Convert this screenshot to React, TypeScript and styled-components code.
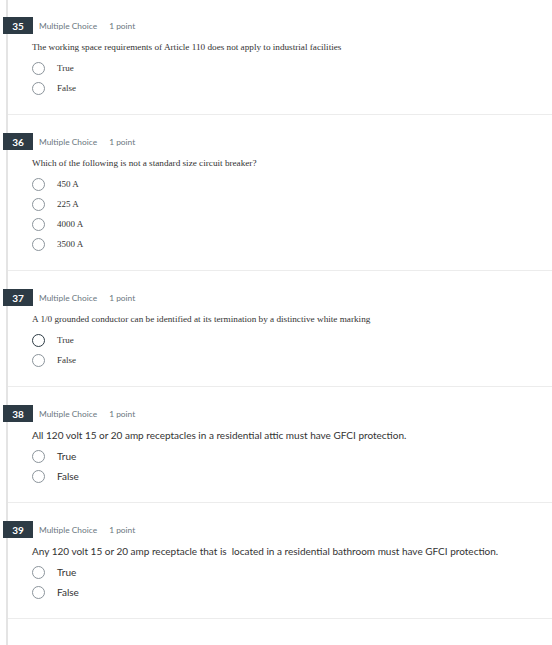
import styled, { createGlobalStyle, css } from 'styled-components';

const GlobalStyle = createGlobalStyle`
  html, body {
    margin: 0;
    padding: 0;
    background: #ffffff;
  }
  body {
    font-family: Lato, "Open Sans", sans-serif;
    color: #2d3b45;
  }
`;

type Face = 'serif' | 'sans';

interface Question {
  number: number;
  text: string;
  face: Face;
  options: string[];
  focused?: number;
}

const questions: Question[] = [
  {
    number: 35,
    text: 'The working space requirements of Article 110 does not apply to industrial facilities',
    face: 'serif',
    options: ['True', 'False'],
  },
  {
    number: 36,
    text: 'Which of the following is not a standard size circuit breaker?',
    face: 'serif',
    options: ['450 A', '225 A', '4000 A', '3500 A'],
  },
  {
    number: 37,
    text: 'A 1/0 grounded conductor can be identified at its termination by a distinctive white marking',
    face: 'serif',
    options: ['True', 'False'],
    focused: 0,
  },
  {
    number: 38,
    text: 'All 120 volt 15 or 20 amp receptacles in a residential attic must have GFCI protection.',
    face: 'sans',
    options: ['True', 'False'],
  },
  {
    number: 39,
    text: 'Any 120 volt 15 or 20 amp receptacle that is  located in a residential bathroom must have GFCI protection.',
    face: 'sans',
    options: ['True', 'False'],
  },
];

const faceStyles = {
  serif: css`
    font-family: "Liberation Serif", "Times New Roman", serif;
    font-size: 9.2px;
  `,
  sans: css`
    font-family: Lato, "Open Sans", sans-serif;
    font-size: 10px;
  `,
};

const Page = styled.div`
  margin-left: 6px;
  min-height: 645px;
  border-left: 2px solid #e4e4e4;
  display: flex;
  flex-direction: column;
`;

const QuestionBlock = styled.section`
  display: flex;
  flex-direction: column;
  padding: 18px 0 16px;
  border-bottom: 1px solid #ececec;

  &:first-child {
    padding-top: 17px;
  }
`;

const Header = styled.header`
  display: flex;
  align-items: center;
  height: 17px;
`;

const NumberBadge = styled.div`
  display: flex;
  align-items: center;
  justify-content: center;
  width: 30px;
  height: 17px;
  margin-left: -5px;
  background: #2d3b45;
  color: #ffffff;
  font-family: Lato, sans-serif;
  font-weight: 700;
  font-size: 10px;
`;

const Meta = styled.span`
  font-family: Lato, sans-serif;
  font-size: 8.4px;
  color: #6b7780;
`;

const QuestionType = styled(Meta)`
  margin-left: 6px;
`;

const Points = styled(Meta)`
  margin-left: 12px;
`;

const QuestionText = styled.p<{ $face: Face }>`
  margin: 6px 0 0 24px;
  line-height: 14px;
  color: #333333;
  white-space: pre;
  ${(p) => faceStyles[p.$face]}
`;

const OptionList = styled.ul`
  list-style: none;
  margin: 4px 0 0;
  padding: 0 0 0 24px;
  display: flex;
  flex-direction: column;
`;

const OptionRow = styled.li`
  display: flex;
  align-items: center;
  height: 20px;
`;

const Radio = styled.span<{ $focused?: boolean }>`
  box-sizing: border-box;
  width: 13px;
  height: 13px;
  border-radius: 50%;
  border: ${(p) => (p.$focused ? '1.6px solid #2d3b45' : '1px solid #8b949b')};
  background: #ffffff;
  flex-shrink: 0;
`;

const OptionLabel = styled.span<{ $face: Face }>`
  margin-left: 12px;
  color: #333333;
  ${(p) => faceStyles[p.$face]}
  font-size: ${(p) => (p.$face === 'serif' ? '9px' : '10px')};
`;

export default function App() {
  return (
    <>
      <GlobalStyle />
      <Page>
        {questions.map((q) => (
          <QuestionBlock key={q.number}>
            <Header>
              <NumberBadge>{q.number}</NumberBadge>
              <QuestionType>Multiple Choice</QuestionType>
              <Points>1 point</Points>
            </Header>
            <QuestionText $face={q.face}>{q.text}</QuestionText>
            <OptionList>
              {q.options.map((opt, i) => (
                <OptionRow key={opt}>
                  <Radio $focused={q.focused === i} />
                  <OptionLabel $face={q.face}>{opt}</OptionLabel>
                </OptionRow>
              ))}
            </OptionList>
          </QuestionBlock>
        ))}
      </Page>
    </>
  );
}
